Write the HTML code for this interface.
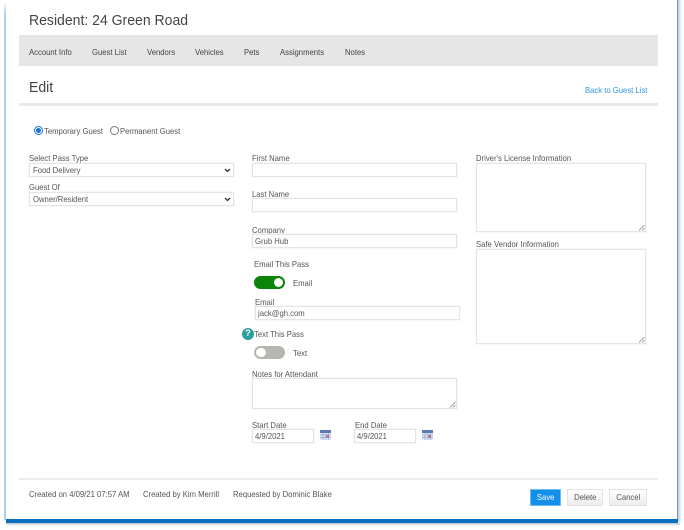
<!DOCTYPE html>
<html>
<head>
<meta charset="utf-8">
<style>
html,body{margin:0;padding:0;background:#fff;}
#p{position:relative;width:684px;height:530px;overflow:hidden;background:#fff;font-family:"Liberation Sans",sans-serif;color:#555;font-size:8.5px;filter:blur(0.3px);}
#p div,#p a,#p textarea,#p svg{position:absolute;box-sizing:border-box;}
.t{white-space:nowrap;line-height:10px;transform:scaleX(.905);transform-origin:0 50%;}
.i{background:#fff;border:1px solid #e4e4e4;box-shadow:0 0 0 .5px #f0f0f0;height:14px;padding-left:3px;line-height:12px;color:#555;white-space:nowrap;}
.i span,.b span{display:inline-block;transform:scaleX(.905);transform-origin:0 50%;}
.b{text-align:center;line-height:15px;height:17px;top:489px;}
.b span{transform-origin:50% 50%;}
.nav{top:47px;color:#444;}
.grip{width:7px;height:7px;}
</style>
</head>
<body>
<div id="p">
  <!-- frame -->
  <div style="left:4px;top:4px;width:2px;height:516px;background:linear-gradient(#e3f0fa,#a9d0ee 12px);"></div>
  <div style="left:677px;top:0;width:1px;height:520px;background:#8a97a3;"></div>
  <div style="left:678px;top:0;width:3px;height:522px;background:linear-gradient(90deg,#a9cfee,#eef6fc);"></div>
  <div style="left:6px;top:519px;width:672px;height:4px;background:#0a6fc0;"></div>
  <div style="left:6px;top:523px;width:674px;height:3px;background:linear-gradient(#b7c6d2,#fff);"></div>

  <div class="t" style="left:29px;top:12px;font-size:15px;line-height:17px;color:#444;transform:scaleX(.935);">Resident: 24 Green Road</div>

  <div style="left:19px;top:35px;width:639px;height:31px;background:#e6e6e6;"></div>
  <div class="t nav" style="left:29px;">Account Info</div>
  <div class="t nav" style="left:92px;">Guest List</div>
  <div class="t nav" style="left:147px;">Vendors</div>
  <div class="t nav" style="left:195px;">Vehicles</div>
  <div class="t nav" style="left:244px;">Pets</div>
  <div class="t nav" style="left:280px;">Assignments</div>
  <div class="t nav" style="left:345px;">Notes</div>

  <div class="t" style="left:29px;top:80px;font-size:15px;line-height:16px;color:#444;transform:scaleX(.935);">Edit</div>
  <a class="t" style="left:585px;top:85px;color:#2f96e8;">Back to Guest List</a>
  <div style="left:19px;top:103px;width:639px;height:3px;background:#e8e8e8;"></div>

  <!-- radios -->
  <div style="left:34px;top:126px;width:9px;height:9px;border-radius:50%;background:#fff;border:1px solid #1a73d8;"></div>
  <div style="left:36px;top:128px;width:5px;height:5px;border-radius:50%;background:#1a73d8;"></div>
  <div class="t" style="left:44px;top:126px;">Temporary Guest</div>
  <div style="left:110px;top:126px;width:9px;height:9px;border-radius:50%;background:#fff;border:1px solid #777;"></div>
  <div class="t" style="left:120px;top:126px;">Permanent Guest</div>

  <!-- left column -->
  <div class="t" style="left:29px;top:153px;">Select Pass Type</div>
  <div class="i" style="left:29px;top:163px;width:205px;padding-left:3px;"><span>Food Delivery</span></div>
  <svg style="left:224px;top:168px;" width="7" height="5" viewBox="0 0 7 5"><path d="M1 1l2.5 2.5L6 1" fill="none" stroke="#333" stroke-width="1.3"/></svg>
  <div class="t" style="left:29px;top:182px;">Guest Of</div>
  <div class="i" style="left:29px;top:192px;width:205px;"><span>Owner/Resident</span></div>
  <svg style="left:224px;top:197px;" width="7" height="5" viewBox="0 0 7 5"><path d="M1 1l2.5 2.5L6 1" fill="none" stroke="#333" stroke-width="1.3"/></svg>

  <!-- middle column -->
  <div class="t" style="left:252px;top:153px;">First Name</div>
  <div class="i" style="left:252px;top:163px;width:205px;"></div>
  <div class="t" style="left:252px;top:189px;">Last Name</div>
  <div class="i" style="left:252px;top:198px;width:205px;"></div>
  <div class="t" style="left:252px;top:224.5px;">Company</div>
  <div class="i" style="left:252px;top:234px;width:205px;padding-left:2px;"><span>Grub Hub</span></div>

  <div class="t" style="left:254px;top:259px;">Email This Pass</div>
  <div style="left:254px;top:276px;width:31px;height:12.5px;border-radius:7px;background:#0a8508;"></div>
  <div style="left:273.5px;top:277.5px;width:9.5px;height:9.5px;border-radius:50%;background:#fff;"></div>
  <div class="t" style="left:293px;top:278px;">Email</div>

  <div class="t" style="left:255px;top:296.5px;">Email</div>
  <div class="i" style="left:255px;top:306px;width:205px;padding-left:2px;"><span>jack@gh.com</span></div>

  <div style="left:242px;top:328px;width:12px;height:12px;border-radius:50%;background:#2b9e9e;color:#fff;font-weight:bold;font-size:9.5px;line-height:12px;text-align:center;">?</div>
  <div class="t" style="left:254px;top:329px;">Text This Pass</div>
  <div style="left:254px;top:346px;width:31px;height:12.5px;border-radius:7px;background:#b4b7b1;"></div>
  <div style="left:256px;top:347.5px;width:9.5px;height:9.5px;border-radius:50%;background:#fff;"></div>
  <div class="t" style="left:293px;top:348px;">Text</div>

  <div class="t" style="left:252px;top:369px;">Notes for Attendant</div>
  <div class="i" style="left:252px;top:378px;width:205px;height:31px;"></div>
  <svg class="grip" style="left:449px;top:401px;" viewBox="0 0 7 7"><path d="M1 6.5L6.5 1M4 6.5L6.5 4" stroke="#888" stroke-width=".8" fill="none"/></svg>

  <div class="t" style="left:252px;top:420px;">Start Date</div>
  <div class="i" style="left:252px;top:429px;width:62px;padding-left:1.5px;"><span>4/9/2021</span></div>
  <svg style="left:320px;top:430px;" width="11" height="10" viewBox="0 0 11 10"><rect width="11" height="10" fill="#dfe6f5"/><rect width="11" height="3" fill="#5a7cb0"/><path d="M0 5h11M0 7.5h11M3 3v7M6 3v7M8.5 3v7" stroke="#8fa8d8" stroke-width=".7"/><rect x="6.5" y="5.5" width="2.5" height="2" fill="#d4574c"/></svg>

  <div class="t" style="left:354.5px;top:420px;">End Date</div>
  <div class="i" style="left:354px;top:429px;width:62px;padding-left:1.5px;"><span>4/9/2021</span></div>
  <svg style="left:422px;top:430px;" width="11" height="10" viewBox="0 0 11 10"><rect width="11" height="10" fill="#dfe6f5"/><rect width="11" height="3" fill="#5a7cb0"/><path d="M0 5h11M0 7.5h11M3 3v7M6 3v7M8.5 3v7" stroke="#8fa8d8" stroke-width=".7"/><rect x="6.5" y="5.5" width="2.5" height="2" fill="#d4574c"/></svg>

  <!-- right column -->
  <div class="t" style="left:476px;top:153px;">Driver's License Information</div>
  <div class="i" style="left:476px;top:163px;width:170px;height:69px;"></div>
  <svg class="grip" style="left:638px;top:224px;" viewBox="0 0 7 7"><path d="M1 6.5L6.5 1M4 6.5L6.5 4" stroke="#888" stroke-width=".8" fill="none"/></svg>
  <div class="t" style="left:476px;top:239px;">Safe Vendor Information</div>
  <div class="i" style="left:476px;top:249px;width:170px;height:95px;"></div>
  <svg class="grip" style="left:638px;top:336px;" viewBox="0 0 7 7"><path d="M1 6.5L6.5 1M4 6.5L6.5 4" stroke="#888" stroke-width=".8" fill="none"/></svg>

  <!-- footer -->
  <div style="left:19px;top:478px;width:639px;height:2px;background:#ececec;"></div>
  <div class="t" style="left:29px;top:489px;">Created on 4/09/21 07:57 AM</div>
  <div class="t" style="left:143px;top:489px;">Created by Kim Merrill</div>
  <div class="t" style="left:232.5px;top:489px;">Requested by Dominic Blake</div>

  <div class="b" style="left:530px;width:31px;background:#128fe8;border:1px solid #6cbcf2;color:#fff;"><span>Save</span></div>
  <div class="b" style="left:567px;width:36px;background:linear-gradient(#fff,#ececec);border:1px solid #e2e2e2;"><span>Delete</span></div>
  <div class="b" style="left:609px;width:38px;background:linear-gradient(#fff,#ececec);border:1px solid #e2e2e2;"><span>Cancel</span></div>
</div>
</body>
</html>
